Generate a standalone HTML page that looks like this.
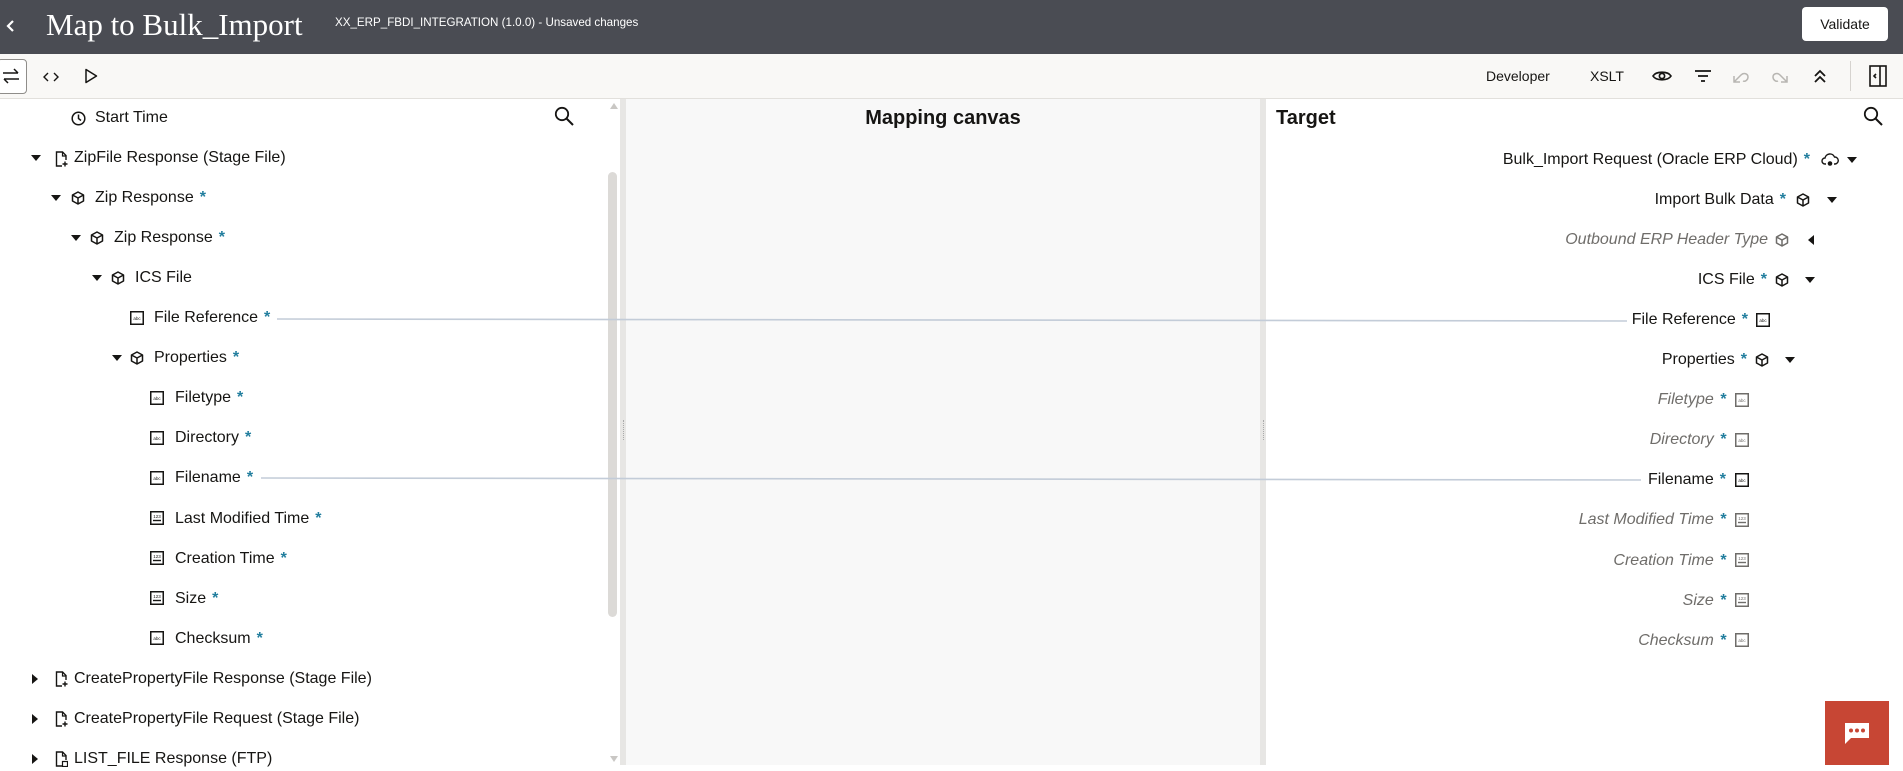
<!DOCTYPE html>
<html><head><meta charset="utf-8"><style>
*{box-sizing:border-box;margin:0;padding:0}
body{width:1903px;height:765px;overflow:hidden;background:#fff;font-family:"Liberation Sans",sans-serif;color:#161513;position:relative}
.hdr{position:absolute;left:0;top:0;width:1903px;height:54px;background:#4a4c53}
.tb{position:absolute;left:0;top:54px;width:1903px;height:45px;background:#f9f8f6;border-bottom:1px solid #e2e0dc}
.a{position:absolute}
.r{position:absolute;height:24px;line-height:24px;font-size:16px;white-space:nowrap}
.st{color:#227e9e;font-weight:bold;margin-left:6px}
.it{font-style:italic;color:#6f6d6a}
svg{display:block}
</style></head><body>
<div class="hdr">
 <svg class="a" style="left:5px;top:18px" width="12" height="16" viewBox="0 0 12 16"><path d="M8 3L3 8l5 5" stroke="#fff" stroke-width="2.2" fill="none"/></svg>
 <div class="a" style="left:46px;top:7px;font-family:'Liberation Serif',serif;font-size:31px;color:#fff">Map to Bulk_Import</div>
 <div class="a" style="left:335px;top:16px;font-size:11.6px;color:#fff">XX_ERP_FBDI_INTEGRATION (1.0.0) - Unsaved changes</div>
 <div class="a" style="left:1802px;top:7px;width:86px;height:34px;background:#fff;border-radius:4px;font-size:14px;line-height:34px;text-align:center;color:#161513">Validate</div>
</div>
<div class="tb">
 <div class="a" style="left:-3px;top:5px;width:30px;height:35px;border:1px solid #8f8d8a;border-radius:4px;background:#fff"></div>
 <svg class="a" style="left:2px;top:14px" width="18" height="16" viewBox="0 0 18 16"><path d="M1 5h15M12 1l4 4M17 11H2M6 15l-4-4" stroke="#161513" stroke-width="1.5" fill="none"/></svg>
 <svg class="a" style="left:43px;top:17px" width="16" height="12" viewBox="0 0 16 12"><path d="M5 2L1 6l4 4M11 2l4 4-4 4" stroke="#161513" stroke-width="1.4" fill="none"/></svg>
 <svg class="a" style="left:84px;top:14px" width="14" height="16" viewBox="0 0 14 16"><path d="M2 1.5v13L12.5 8z" stroke="#161513" stroke-width="1.5" fill="none" stroke-linejoin="round"/></svg>
 <div class="a" style="left:1486px;top:14px;font-size:14px">Developer</div>
 <div class="a" style="left:1590px;top:14px;font-size:14px">XSLT</div>
 <svg class="a" style="left:1652px;top:15px" width="20" height="14" viewBox="0 0 20 14"><path d="M1 7C4 2 16 2 19 7C16 12 4 12 1 7z" stroke="#161513" stroke-width="1.7" fill="none"/><circle cx="10" cy="7" r="2.6" stroke="#161513" stroke-width="1.7" fill="none"/></svg>
 <svg class="a" style="left:1694px;top:15px" width="18" height="14" viewBox="0 0 18 14"><path d="M1 2h16M4 7h10M7 12h4" stroke="#161513" stroke-width="1.8"/></svg>
 <svg class="a" style="left:1732px;top:14px" width="18" height="16" viewBox="0 0 18 16"><path d="M2 14l7-7c3-3 7-1 7 2s-3 5-5 4M2 8v6h6" stroke="#b8b6b2" stroke-width="1.5" fill="none"/></svg>
 <svg class="a" style="left:1771px;top:14px" width="18" height="16" viewBox="0 0 18 16"><path d="M16 14L9 7C6 4 2 6 2 9s3 5 5 4M16 8v6h-6" stroke="#b8b6b2" stroke-width="1.5" fill="none"/></svg>
 <svg class="a" style="left:1813px;top:14px" width="14" height="16" viewBox="0 0 14 16"><path d="M2 8l5-5 5 5M2 14l5-5 5 5" stroke="#161513" stroke-width="1.8" fill="none"/></svg>
 <div class="a" style="left:1850px;top:7px;width:1px;height:30px;background:#d6d3cf"></div>
 <svg class="a" style="left:1869px;top:11px" width="18" height="22" viewBox="0 0 18 22"><rect x="1" y="1" width="16" height="20" stroke="#161513" stroke-width="1.6" fill="none"/><path d="M11 1v20M7 9l-2 2 2 2" stroke="#161513" stroke-width="1.6" fill="none"/></svg>
</div>

<div class="a" style="left:610px;top:103px;width:0;height:0;border-left:4px solid transparent;border-right:4px solid transparent;border-bottom:6px solid #c9c7c4"></div>
<div class="a" style="left:608px;top:172px;width:9px;height:445px;background:#dcdad7;border-radius:5px"></div>
<div class="a" style="left:610px;top:756px;width:0;height:0;border-left:4px solid transparent;border-right:4px solid transparent;border-top:6px solid #c9c7c4"></div>
<svg class="a" style="left:554px;top:106px" width="20" height="20" viewBox="0 0 20 20"><circle cx="8" cy="8" r="6.2" stroke="#161513" stroke-width="1.8" fill="none"/><path d="M12.5 12.5L19 19" stroke="#161513" stroke-width="2"/></svg>

<div class="a" style="left:620px;top:99px;width:646px;height:666px;background:#e7e6e4"></div>
<div class="a" style="left:626px;top:99px;width:634px;height:666px;background:#f8f8f8"></div>
<div class="a" style="left:623px;top:420px;width:1px;height:20px;border-left:1px dotted #aaa"></div>
<div class="a" style="left:1263px;top:420px;width:1px;height:20px;border-left:1px dotted #aaa"></div>
<div class="a" style="left:626px;top:107px;width:634px;text-align:center;font-weight:bold;font-size:20px">Mapping canvas</div>
<div class="a" style="left:1276px;top:107px;font-weight:bold;font-size:20px">Target</div>
<svg class="a" style="left:1863px;top:106px" width="20" height="20" viewBox="0 0 20 20"><circle cx="8" cy="8" r="6.2" stroke="#161513" stroke-width="1.8" fill="none"/><path d="M12.5 12.5L19 19" stroke="#161513" stroke-width="2"/></svg>

<svg class="a" style="left:0;top:0" width="1903" height="765"><path d="M277 319L1627 321M261 478L1641 480" stroke="#c3ccd8" stroke-width="1.6"/></svg>

<div id="L"></div>
<script>
const cube=(c='#161513')=>`<svg width="14" height="14" viewBox="0 0 14 14"><path d="M7 1L12.5 4v6L7 13 1.5 10V4z M1.5 4L7 7l5.5-3M7 7v6" stroke="${c}" stroke-width="1.5" fill="none" stroke-linejoin="round"/></svg>`;
const abc=(c='#161513')=>`<svg width="14" height="14" viewBox="0 0 14 14"><rect x="0.75" y="0.75" width="12.5" height="12.5" stroke="${c}" stroke-width="1.5" fill="none"/><text x="7" y="9" font-size="4.5" text-anchor="middle" font-family="Liberation Sans" fill="${c}">abc</text></svg>`;
const num=(c='#161513')=>`<svg width="14" height="14" viewBox="0 0 14 14"><rect x="0.75" y="0.75" width="12.5" height="12.5" stroke="${c}" stroke-width="1.5" fill="none"/><text x="7" y="7" font-size="4.5" text-anchor="middle" font-family="Liberation Sans" fill="${c}">123</text><path d="M3 9.5h8" stroke="${c}" stroke-width="1.4"/></svg>`;
const file=(k)=>`<svg width="13" height="16" viewBox="0 0 13 16"><path d="M7 15H1.5V1h6l3.5 3.5V9" stroke="#161513" stroke-width="1.4" fill="none"/><path d="M7.5 1v4h3.5" stroke="#161513" stroke-width="1.2" fill="none"/>${k?'<rect x="7.5" y="10.5" width="5" height="5" stroke="#161513" stroke-width="1.2" fill="none"/>':'<path d="M10 10.5v5M7.5 13h5" stroke="#161513" stroke-width="1.4"/>'}</svg>`;
const clock=`<svg width="15" height="15" viewBox="0 0 15 15"><circle cx="7.5" cy="7.5" r="6.3" stroke="#161513" stroke-width="1.5" fill="none"/><path d="M7.5 3.5v4l2.5 2" stroke="#161513" stroke-width="1.5" fill="none"/></svg>`;
const dn=`<svg width="10" height="6" viewBox="0 0 10 6"><path d="M0 0h10L5 6z" fill="#161513"/></svg>`;
const rt=`<svg width="6" height="10" viewBox="0 0 6 10"><path d="M0 0v10l6-5z" fill="#161513"/></svg>`;
const lt=`<svg width="6" height="10" viewBox="0 0 6 10"><path d="M6 0v10L0 5z" fill="#161513"/></svg>`;
const cloud=`<svg width="18" height="16" viewBox="0 0 18 16"><path d="M5 12H4a3 3 0 010-6 5 5 0 019.5-1A3.3 3.3 0 0114 12h-1" stroke="#161513" stroke-width="1.4" fill="none"/><circle cx="9" cy="11.5" r="2.3" fill="#161513"/></svg>`;
const cy=k=>(96+33*k)*1.2137+1.5;
let h='';
function L(k,arrow,ax,icon,ix,text,tx,star){
 const y=cy(k);
 if(arrow) h+=`<div class="a" style="left:${ax-5}px;top:${y-(arrow==dn?3:5)}px">${arrow}</div>`;
 h+=`<div class="a" style="left:${ix-7}px;top:${y-7.5}px">${icon}</div>`;
 h+=`<div class="r" style="left:${tx}px;top:${y-12}px">${text}${star?'<span class="st">*</span>':''}</div>`;
}
L(0,null,0,clock,78,'Start Time',95,0);
L(1,dn,36,file(0),62,'ZipFile Response (Stage File)',74,0);
L(2,dn,56,cube(),78,'Zip Response',95,1);
L(3,dn,76,cube(),97,'Zip Response',114,1);
L(4,dn,97,cube(),118,'ICS File',135,0);
L(5,null,0,abc(),137,'File Reference',154,1);
L(6,dn,117,cube(),137,'Properties',154,1);
L(7,null,0,abc(),157,'Filetype',175,1);
L(8,null,0,abc(),157,'Directory',175,1);
L(9,null,0,abc(),157,'Filename',175,1);
L(10,null,0,num(),157,'Last Modified Time',175,1);
L(11,null,0,num(),157,'Creation Time',175,1);
L(12,null,0,num(),157,'Size',175,1);
L(13,null,0,abc(),157,'Checksum',175,1);
L(14,rt,37,file(0),62,'CreatePropertyFile Response (Stage File)',74,0);
L(15,rt,37,file(0),62,'CreatePropertyFile Request (Stage File)',74,0);
L(16,rt,37,file(1),62,'LIST_FILE Response (FTP)',74,0);
const ry=k=>(131+33*k)*1.2137+1;
function R(k,text,tend,star,italic,icon,ix,arrow,axc){
 const y=ry(k);
 h+=`<div class="r${italic?' it':''}" style="right:${1903-tend}px;top:${y-12}px">${text}${star?'<span class="st">*</span>':''}</div>`;
 h+=`<div class="a" style="left:${ix-7}px;top:${y-7.5}px">${icon}</div>`;
 if(arrow) h+=`<div class="a" style="left:${axc-(arrow==dn?5:3)}px;top:${y-(arrow==dn?3:5)}px">${arrow}</div>`;
}
R(0,'Bulk_Import Request (Oracle ERP Cloud)',1810,1,0,cloud,1828,dn,1852);
R(1,'Import Bulk Data',1786,1,0,cube(),1803,dn,1832);
R(2,'Outbound ERP Header Type',1768,0,1,cube('#6f6d6a'),1782,lt,1811);
R(3,'ICS File',1767,1,0,cube(),1782,dn,1810);
R(4,'File Reference',1748,1,0,abc(),1763,null,0);
R(5,'Properties',1747,1,0,cube(),1762,dn,1790);
R(6,'Filetype',1726,1,1,abc('#6f6d6a'),1742,null,0);
R(7,'Directory',1726,1,1,abc('#6f6d6a'),1742,null,0);
R(8,'Filename',1726,1,0,abc(),1742,null,0);
R(9,'Last Modified Time',1726,1,1,num('#6f6d6a'),1742,null,0);
R(10,'Creation Time',1726,1,1,num('#6f6d6a'),1742,null,0);
R(11,'Size',1726,1,1,num('#6f6d6a'),1742,null,0);
R(12,'Checksum',1726,1,1,abc('#6f6d6a'),1742,null,0);
document.getElementById('L').innerHTML=h;
</script>
<div class="a" style="left:1825px;top:701px;width:64px;height:64px;background:#c74634"></div>
<svg class="a" style="left:1843px;top:722px" width="28" height="24" viewBox="0 0 28 24"><path d="M2 1h24v15H8l-6 6z" fill="#fff"/><circle cx="8" cy="8.5" r="2" fill="#c74634"/><circle cx="14" cy="8.5" r="2" fill="#c74634"/><circle cx="20" cy="8.5" r="2" fill="#c74634"/></svg>
</body></html>
